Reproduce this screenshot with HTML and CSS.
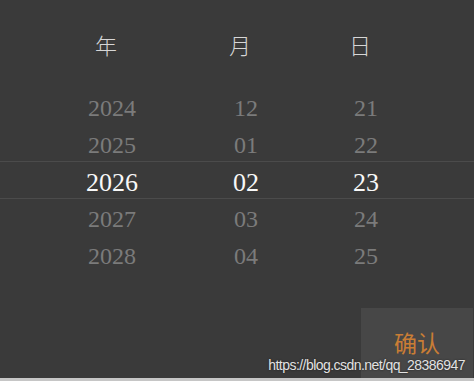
FILE: index.html
```html
<!DOCTYPE html>
<html lang="zh">
<head>
<meta charset="utf-8">
<link rel="stylesheet" href="styles.css">
</head>
<body>
<div class="picker">
  <div class="head">
    <div class="hcell">年</div>
    <div class="hcell">月</div>
    <div class="hcell">日</div>
  </div>
  <div class="wheel">
    <div class="band"></div>
    <div class="row"><span>2024</span><span>12</span><span>21</span></div>
    <div class="row"><span>2025</span><span>01</span><span>22</span></div>
    <div class="row sel"><span>2026</span><span>02</span><span>23</span></div>
    <div class="row"><span>2027</span><span>03</span><span>24</span></div>
    <div class="row"><span>2028</span><span>04</span><span>25</span></div>
  </div>
  <div class="foot">
    <div class="ok">确认</div>
  </div>
  <div class="strip"></div>
  <div class="mark">https://blog.csdn.net/qq_28386947</div>
</div>
</body>
</html>
```
FILE: styles.css
```css
html, body {
  margin: 0;
  padding: 0;
  background: #3a3a3a;
}
.picker {
  position: relative;
  width: 474px;
  height: 381px;
  overflow: hidden;
  background: #3a3a3a;
}
.head {
  display: grid;
  grid-template-columns: 120px 148px 92px;
  padding-left: 46px;
  margin-top: 24px;
  height: 40px;
}
.hcell {
  text-align: center;
  line-height: 40px;
  font-family: "Noto Sans CJK SC", sans-serif;
  font-weight: 300;
  font-size: 22px;
  color: #d6d6d6;
}
.wheel {
  position: relative;
  margin-top: 26px;
}
.band {
  position: absolute;
  left: 0;
  right: 0;
  top: 71px;
  height: 36px;
  border-top: 1px solid #4b4b4b;
  border-bottom: 1px solid #4b4b4b;
}
.row {
  display: grid;
  grid-template-columns: 120px 148px 92px;
  padding-left: 52px;
  height: 37px;
  line-height: 37px;
  font-family: "Liberation Serif", serif;
  font-size: 24px;
  color: #7b7b7b;
}
.row span {
  text-align: center;
}
.row.sel {
  font-size: 26px;
  color: #f8f8f8;
}
.foot {
  display: flex;
  justify-content: flex-end;
  margin-top: 33px;
  padding-right: 1px;
}
.ok {
  width: 112px;
  height: 70px;
  background: #474747;
  display: flex;
  align-items: center;
  justify-content: center;
  font-family: "Noto Sans CJK SC", sans-serif;
  font-size: 23px;
  color: #c97d35;
  padding-bottom: 2px;
  box-sizing: border-box;
}
.strip {
  height: 3px;
  background: #c6c6c6;
}
.mark {
  position: absolute;
  right: 9px;
  bottom: 8px;
  font-family: "Liberation Sans", sans-serif;
  font-size: 14px;
  letter-spacing: -0.55px;
  color: #e2e2e2;
  text-shadow: 0 0 2px rgba(0,0,0,0.6);
}
```
